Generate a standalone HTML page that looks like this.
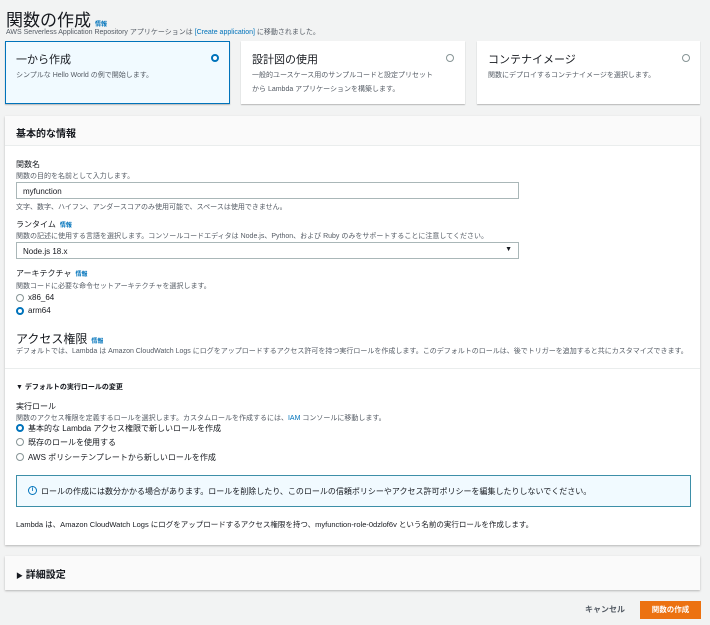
<!DOCTYPE html><html><head><meta charset="utf-8"><style>
*{margin:0;padding:0;box-sizing:border-box}
body{width:710px;height:625px;background:#f2f3f3;font-family:"Liberation Sans","Noto Sans CJK JP",sans-serif;color:#16191f;position:relative;overflow:hidden}
.a{position:absolute;white-space:nowrap}
.s{font-size:7px;color:#545b64}
.l{font-size:8px;color:#16191f}
.i{color:#0073bb;font-size:6px;font-weight:bold;margin-left:4px}
.card{position:absolute;top:41px;height:63px;background:#fff;box-shadow:0 1px 1px rgba(0,0,0,.25)}
.r{position:absolute;width:8px;height:8px;border:1px solid #879596;border-radius:50%;background:#fff}
.r.on{border:2.5px solid #0073bb}
.panel{position:absolute;left:5px;width:695px;background:#fff;box-shadow:0 1px 2px rgba(0,0,0,.25)}
</style></head><body>
<div class="a" style="left:6px;top:6px;font-size:17px">関数の作成<span class="i">情報</span></div>
<div class="a s" style="left:6px;top:27px">AWS Serverless Application Repository アプリケーションは <span style="color:#0073bb">[Create application]</span> に移動されました。</div>
<div class="card" style="left:5px;width:225px;background:#f1faff;border:1px solid #0073bb"></div>
<div class="card" style="left:241px;width:224px"></div>
<div class="card" style="left:477px;width:223px"></div>
<div class="a" style="left:16px;top:51px;font-size:11px">一から作成</div>
<div class="a s" style="left:16px;top:70px">シンプルな Hello World の例で開始します。</div>
<div class="r on" style="left:211px;top:54px"></div>
<div class="a" style="left:252px;top:51px;font-size:11px">設計図の使用</div>
<div class="a s" style="left:252px;top:70px">一般的ユースケース用のサンプルコードと設定プリセット</div>
<div class="a s" style="left:252px;top:84px">から Lambda アプリケーションを構築します。</div>
<div class="r" style="left:446px;top:54px"></div>
<div class="a" style="left:488px;top:51px;font-size:11px">コンテナイメージ</div>
<div class="a s" style="left:488px;top:70px">関数にデプロイするコンテナイメージを選択します。</div>
<div class="r" style="left:682px;top:54px"></div>

<div class="panel" style="top:116px;height:429px"></div>
<div class="a" style="left:5px;top:116px;width:695px;height:30px;background:#fafafa;border-bottom:1px solid #eaeded"></div>
<div class="a" style="left:16px;top:125px;font-size:10px;font-weight:bold">基本的な情報</div>
<div class="a l" style="left:16px;top:159px">関数名</div>
<div class="a s" style="left:16px;top:171px">関数の目的を名前として入力します。</div>
<div class="a" style="left:16px;top:182px;width:503px;height:17px;border:1px solid #aab7b8;font-size:8px;padding:4px 6px">myfunction</div>
<div class="a s" style="left:16px;top:202px">文字、数字、ハイフン、アンダースコアのみ使用可能で、スペースは使用できません。</div>
<div class="a l" style="left:16px;top:219px">ランタイム<span class="i">情報</span></div>
<div class="a s" style="left:16px;top:231px">関数の記述に使用する言語を選択します。コンソールコードエディタは Node.js、Python、および Ruby のみをサポートすることに注意してください。</div>
<div class="a" style="left:16px;top:242px;width:503px;height:17px;border:1px solid #aab7b8;font-size:8px;padding:4px 6px">Node.js 18.x<span style="position:absolute;right:6px;top:3px;font-size:7px">▼</span></div>
<div class="a l" style="left:16px;top:268px">アーキテクチャ<span class="i">情報</span></div>
<div class="a s" style="left:16px;top:281px">関数コードに必要な命令セットアーキテクチャを選択します。</div>
<div class="r" style="left:16px;top:294px"></div><div class="a l" style="left:28px;top:293px">x86_64</div>
<div class="r on" style="left:16px;top:307px"></div><div class="a l" style="left:28px;top:306px">arm64</div>
<div class="a" style="left:16px;top:330px;font-size:12px">アクセス権限<span class="i">情報</span></div>
<div class="a s" style="left:16px;top:346px">デフォルトでは、Lambda は Amazon CloudWatch Logs にログをアップロードするアクセス許可を持つ実行ロールを作成します。このデフォルトのロールは、後でトリガーを追加すると共にカスタマイズできます。</div>
<div class="a" style="left:5px;top:368px;width:695px;border-top:1px solid #eaeded"></div>
<div class="a l" style="left:16px;top:382px;font-weight:bold;font-size:7px">▼ デフォルトの実行ロールの変更</div>
<div class="a l" style="left:16px;top:401px">実行ロール</div>
<div class="a s" style="left:16px;top:413px">関数のアクセス権限を定義するロールを選択します。カスタムロールを作成するには、<span style="color:#0073bb">IAM</span> コンソールに移動します。</div>
<div class="r on" style="left:16px;top:424px"></div><div class="a l" style="left:28px;top:423px">基本的な Lambda アクセス権限で新しいロールを作成</div>
<div class="r" style="left:16px;top:438px"></div><div class="a l" style="left:28px;top:437px">既存のロールを使用する</div>
<div class="r" style="left:16px;top:453px"></div><div class="a l" style="left:28px;top:452px">AWS ポリシーテンプレートから新しいロールを作成</div>
<div class="a" style="left:16px;top:475px;width:675px;height:32px;background:#f1faff;border:1px solid #3d8fa8"></div>
<div class="a" style="left:28px;top:486px;width:9px;height:9px;border:1.5px solid #0073bb;border-radius:50%;font-size:6px;color:#0073bb;text-align:center;line-height:6px;font-weight:bold">i</div>
<div class="a l" style="left:41px;top:486px">ロールの作成には数分かかる場合があります。ロールを削除したり、このロールの信頼ポリシーやアクセス許可ポリシーを編集したりしないでください。</div>
<div class="a l" style="left:16px;top:519px;font-size:7.5px">Lambda は、Amazon CloudWatch Logs にログをアップロードするアクセス権限を持つ、myfunction-role-0dzlof6v という名前の実行ロールを作成します。</div>

<div class="panel" style="top:556px;height:34px;background:#fafafa"></div>
<div class="a" style="left:16px;top:566px;font-size:10px;font-weight:bold"><span style="font-size:7px">▶</span> 詳細設定</div>
<div class="a" style="left:585px;top:604px;font-size:8px;font-weight:bold;color:#545b64">キャンセル</div>
<div class="a" style="left:640px;top:601px;width:61px;height:18px;background:#ec7211;color:#fff;font-size:7.5px;font-weight:bold;text-align:center;line-height:18px">関数の作成</div>
</body></html>
